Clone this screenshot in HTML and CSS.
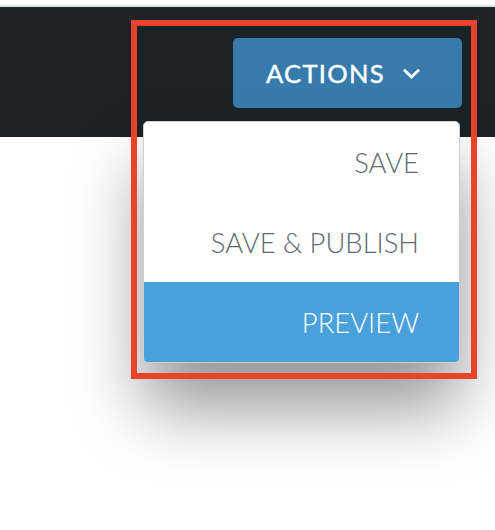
FILE: index.html
```html
<!DOCTYPE html>
<html>
<head>
<meta charset="utf-8">
<link rel="stylesheet" href="styles.css">
</head>
<body>
<div class="page">
  <header class="header">
    <div class="actions">
      <button class="actions-btn">
        <span class="actions-label">ACTIONS</span>
        <svg class="chevron" width="17" height="10" viewBox="0 0 17 10"><path d="M2 1.8 L8.5 8 L15 1.8" fill="none" stroke="#ffffff" stroke-width="2.8" stroke-linecap="square"/></svg>
      </button>
      <ul class="menu">
        <li class="menu-item">SAVE</li>
        <li class="menu-item">SAVE &amp; PUBLISH</li>
        <li class="menu-item active">PREVIEW</li>
      </ul>
    </div>
  </header>
  <div class="highlight-box"></div>
</div>
</body>
</html>
```
FILE: styles.css
```css
html, body {
  margin: 0;
  padding: 0;
  background: #ffffff;
}
.page {
  position: relative;
  width: 495px;
  height: 530px;
  overflow: hidden;
  font-family: Lato, "Open Sans", sans-serif;
}
.header {
  margin-top: 5px;
  border-top: 2px solid #dfe3e0;
  background: #1b2329;
  display: flex;
  justify-content: flex-end;
  align-items: flex-start;
  padding: 31px 33px 0 0;
  box-sizing: border-box;
  height: 132px;
}
.actions {
  position: relative;
}
.actions-btn {
  width: 229px;
  height: 70px;
  border: none;
  border-radius: 5px;
  background: #377bad;
  color: #ffffff;
  display: flex;
  align-items: center;
  padding: 0 0 0 33px;
  gap: 18px;
  font-family: Lato, sans-serif;
  font-weight: 400;
  font-size: 25.5px;
  letter-spacing: 1.3px;
  -webkit-text-stroke: 0.45px #ffffff;
  cursor: pointer;
}
.actions-label {
  line-height: 1;
  margin-top: 1px;
}
.chevron {
  display: block;
  margin-top: 1px;
}
.menu {
  position: absolute;
  top: 83px;
  right: 2px;
  width: 317px;
  margin: 0;
  padding: 0;
  list-style: none;
  background: #ffffff;
  border: 1px solid #cfcfcf;
  border-radius: 5px;
  box-sizing: border-box;
  overflow: hidden;
  box-shadow: 0 45px 70px rgba(0, 0, 0, 0.42);
}
.menu-item {
  height: 80px;
  display: flex;
  align-items: center;
  justify-content: flex-end;
  padding-right: 40px;
  font-family: Lato, sans-serif;
  font-weight: 300;
  font-size: 27.4px;
  color: #5d6975;
}
.menu-item.active {
  background: #49a1dc;
  color: #ffffff;
}
.highlight-box {
  position: absolute;
  left: 131px;
  top: 20px;
  width: 346px;
  height: 359px;
  border: 6px solid #e9442a;
  box-sizing: border-box;
  pointer-events: none;
}
```
